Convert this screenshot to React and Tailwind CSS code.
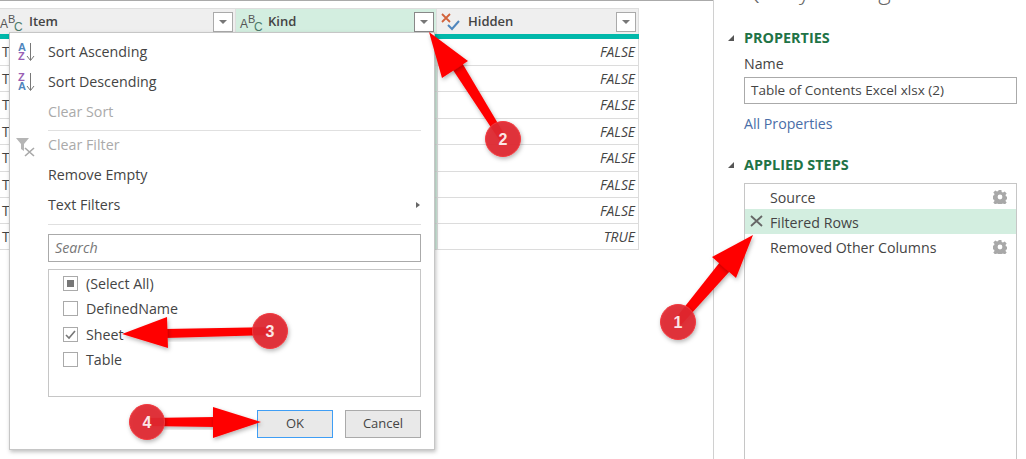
import React from 'react';

const hiddenValues = ['FALSE', 'FALSE', 'FALSE', 'FALSE', 'FALSE', 'FALSE', 'FALSE', 'TRUE'];
const rowHeights = ['h-[27px]', 'h-[26px]', 'h-[27px]', 'h-[26px]', 'h-[27px]', 'h-[26px]', 'h-[26px]', 'h-[26px]'];

const AbcIcon = () => (
  <span className="relative block w-[22px] h-[20px] font-['Liberation_Sans',sans-serif] text-[#555] leading-none">
    <span className="absolute left-0 top-[6px] text-[12px]">A</span>
    <span className="absolute left-[8px] top-[2px] text-[11px]">B</span>
    <span className="absolute left-[14px] top-[9px] text-[12px] text-[#4a7a6a]">C</span>
  </span>
);

const DropButton = ({ strong }) => (
  <span className={`flex items-center justify-center w-[20px] h-[20px] bg-white border ${strong ? 'border-[#888]' : 'border-[#aaa]'}`}>
    <span className="w-0 h-0 border-l-[4px] border-r-[4px] border-t-[4px] border-l-transparent border-r-transparent border-t-[#777]" />
  </span>
);

const BoolIcon = () => (
  <svg width="20" height="20" viewBox="0 0 20 20" fill="none">
    <path d="M1 2l8 8M9 2l-8 8" stroke="#d2633c" strokeWidth="1.8" />
    <path d="M7 13l4 4 7-8" stroke="#4f86bd" strokeWidth="2" />
  </svg>
);

const HeaderCell = ({ label, icon, className, strong, iconWidth }) => (
  <div className={`flex items-center pr-[2px] h-[25px] border-r border-[#dedede] ${className}`}>
    <span className={`shrink-0 ${iconWidth}`}>{icon}</span>
    <span className="flex-1 text-[13px] font-semibold text-[#444]">{label}</span>
    <DropButton strong={strong} />
  </div>
);

const SortIcon = ({ top, bottom, topColor, bottomColor }) => (
  <span className="relative block w-[20px] h-[18px] mt-[-1px] font-['Liberation_Sans',sans-serif] font-bold text-[11px] leading-[9px]">
    <span className={`absolute left-[2px] top-0 ${topColor}`}>{top}</span>
    <span className={`absolute left-[2px] top-[9px] ${bottomColor}`}>{bottom}</span>
    <svg className="absolute left-[10px] top-0" width="9" height="18" viewBox="0 0 9 18" fill="none">
      <path d="M4.5 0v17M1 13l3.5 4.5L8 13" stroke="#777" strokeWidth="1" />
    </svg>
  </span>
);

const FilterClearIcon = () => (
  <svg width="20" height="20" viewBox="0 0 20 20" fill="none">
    <path d="M0 1h13L8 7v7L5 12V7z" fill="#b5b5b5" />
    <path d="M9 11l9 8M18 11l-9 8" stroke="#a8a8a8" strokeWidth="1.6" />
  </svg>
);

const MenuItem = ({ label, icon, disabled, arrow }) => (
  <div className={`relative flex items-center h-[30px] pl-[38px] pr-[14px] ${disabled ? 'text-[#aaa]' : 'text-[#444]'}`}>
    {icon && <span className="absolute left-[6px] top-[7px]">{icon}</span>}
    <span className="flex-1">{label}</span>
    {arrow && <span className="w-0 h-0 border-t-[3px] border-b-[3px] border-l-[4px] border-t-transparent border-b-transparent border-l-[#666]" />}
  </div>
);

const CheckRow = ({ label, state }) => (
  <div className="flex items-center h-[25.3px] pl-[14px]">
    <span className="flex items-center justify-center w-[15px] h-[15px] bg-white border border-[#aaa] mr-[8px]">
      {state === 'mixed' && <span className="w-[7px] h-[7px] bg-[#777]" />}
      {state === 'checked' && (
        <svg width="11" height="11" viewBox="0 0 11 11" fill="none">
          <path d="M1 6l3 3 6-7" stroke="#777" strokeWidth="1.6" />
        </svg>
      )}
    </span>
    <span>{label}</span>
  </div>
);

const FilterPopup = () => (
  <div className="absolute left-[9px] top-[32px] w-[426px] h-[418px] bg-white border border-[#c6c6c6] shadow-[1px_2px_4px_rgba(0,0,0,0.25)] text-[14.25px]">
    <div className="pt-[4px]">
      <MenuItem
        label="Sort Ascending"
        icon={<SortIcon top="A" bottom="Z" topColor="text-[#4f86bd]" bottomColor="text-[#9a5fb4]" />}
      />
      <MenuItem
        label="Sort Descending"
        icon={<SortIcon top="Z" bottom="A" topColor="text-[#9a5fb4]" bottomColor="text-[#4f86bd]" />}
      />
      <MenuItem label="Clear Sort" disabled />
      <div className="ml-[38px] mr-[13px] border-t border-[#e0e0e0] mt-[3px] mb-[-1px]" />
      <MenuItem label="Clear Filter" disabled icon={<FilterClearIcon />} />
      <MenuItem label="Remove Empty" />
      <MenuItem label="Text Filters" arrow />
      <div className="ml-[38px] mr-[13px] border-t border-[#e0e0e0] mt-[4px]" />
    </div>
    <div className="ml-[38px] mr-[13px] mt-[9px] h-[28px] flex items-center px-[6px] border border-[#aaa] italic text-[#777]">Search</div>
    <div className="ml-[38px] mr-[13px] mt-[7px] h-[128px] border border-[#c6c6c6] pt-[1px] text-[#444]">
      <CheckRow label="(Select All)" state="mixed" />
      <CheckRow label="DefinedName" />
      <CheckRow label="Sheet" state="checked" />
      <CheckRow label="Table" />
    </div>
    <div className="flex justify-end gap-[12px] mr-[13px] mt-[13px] text-[13px] text-[#444]">
      <div className="flex items-center justify-center w-[76px] h-[28px] bg-[#e9e9e9] border border-[#3f9ef5]">OK</div>
      <div className="flex items-center justify-center w-[76px] h-[28px] bg-[#e9e9e9] border border-[#aaa]">Cancel</div>
    </div>
  </div>
);

const DataTable = () => (
  <div className="mt-[7px] ml-0 w-[639px]">
    <div className="grid grid-cols-[236px_201px_202px] border-t border-[#dedede]">
      <HeaderCell label="Item" icon={<AbcIcon />} iconWidth="w-[29px]" className="bg-[#efefef]" />
      <HeaderCell label="Kind" icon={<AbcIcon />} iconWidth="w-[28px] ml-[4px]" className="bg-[#d3eee0]" strong />
      <HeaderCell label="Hidden" icon={<BoolIcon />} iconWidth="w-[27px] ml-[4px]" className="bg-[#efefef]" />
    </div>
    <div className="h-[5px] bg-[#01b8aa]" />
    {hiddenValues.map((value, index) => (
      <div key={index} className={`grid grid-cols-[236px_201px_202px] border-b border-[#dcdcdc] ${rowHeights[index]}`}>
        <div className="pl-[2px] text-[14px] leading-[25px] text-[#444]">T</div>
        <div className="bg-[#d3eee0]" />
        <div className="border-l border-r border-[#dcdcdc] pr-[3px] text-right text-[13.8px] italic leading-[25px] text-[#444]">{value}</div>
      </div>
    ))}
  </div>
);

const SectionTitle = ({ children }) => (
  <div className="flex items-center">
    <span className="ml-[14px] w-[16px]">
      <span className="block w-0 h-0 border-b-[6px] border-l-[6px] border-l-transparent border-b-[#555]" />
    </span>
    <span className="text-[14.4px] font-bold text-[#217346] leading-[20px]">{children}</span>
  </div>
);

const Gear = () => (
  <svg width="14" height="14" viewBox="0 0 14 14">
    <path
      fillRule="evenodd"
      fill="#a8a8a8"
      d="M5.6 0h2.8l.3 2 1.3.6 1.7-1.2 2 2-1.2 1.7.5 1.3 2 .3v2.6l-2 .3-.5 1.3 1.2 1.7-2 2-1.7-1.2-1.3.5-.3 2H5.6l-.3-2-1.3-.5-1.7 1.2-2-2 1.2-1.7-.5-1.3-2-.3V5.7l2-.3.5-1.3L.3 2.4l2-2L4 1.6l1.3-.6zM7 4.6a2.4 2.4 0 100 4.8 2.4 2.4 0 000-4.8z"
    />
  </svg>
);

const StepRow = ({ label, active, gear }) => (
  <div className={`relative flex items-center h-[25px] pl-[25px] pr-[9px] ${active ? 'bg-[#d3eee0]' : ''}`}>
    {active && (
      <svg className="absolute left-[5px] top-[6px]" width="13" height="12" viewBox="0 0 13 12" fill="none">
        <path d="M1 1l11 10M12 1L1 11" stroke="#666" strokeWidth="1.8" />
      </svg>
    )}
    <span className="flex-1 pt-[2px]">{label}</span>
    {gear && <Gear />}
  </div>
);

const SettingsPanel = () => (
  <div className="w-[313px] border-l border-[#d0d0d0] text-[14.2px] text-[#444] overflow-hidden">
    <div className="h-[7px] overflow-hidden">
      <div className="ml-[30px] mt-[-26px] text-[24px] leading-[32px] font-light text-[#666]">Query Settings</div>
    </div>
    <div className="mt-[21px]"><SectionTitle>PROPERTIES</SectionTitle></div>
    <div className="ml-[30px] mt-[6px] leading-[20px]">Name</div>
    <div className="ml-[30px] mr-[9px] mt-[3px] h-[27px] flex items-center pl-[6px] border border-[#aaa] text-[13.5px]">Table of Contents Excel xlsx (2)</div>
    <div className="ml-[30px] mt-[10px] leading-[20px] text-[#4a6ea8]">All Properties</div>
    <div className="mt-[21px]"><SectionTitle>APPLIED STEPS</SectionTitle></div>
    <div className="ml-[30px] mr-[9px] mt-[8px] h-[300px] border border-[#c6c6c6]">
      <StepRow label="Source" gear />
      <StepRow label="Filtered Rows" active />
      <StepRow label="Removed Other Columns" gear />
    </div>
  </div>
);

const Arrow = ({ tail, shaft, head, n }) => (
  <g>
    <polygon points={shaft} fill="#ff0000" filter="url(#arrow-shadow)" />
    <polygon points={head} fill="#ff0000" filter="url(#arrow-shadow)" />
    <circle cx={tail[0]} cy={tail[1]} r="17.5" fill="#e0282e" fillOpacity="0.93" stroke="#f23a3f" strokeWidth="1" filter="url(#arrow-shadow)" />
    <text x={tail[0]} y={tail[1] + 6} textAnchor="middle" fontFamily="Liberation Sans, sans-serif" fontWeight="700" fontSize="16" fill="#fbe6e6">{n}</text>
  </g>
);

const Annotations = () => (
  <svg className="absolute inset-0 pointer-events-none" width="1026" height="459" viewBox="0 0 1026 459">
    <defs>
      <filter id="arrow-shadow" x="-30%" y="-30%" width="160%" height="160%">
        <feDropShadow dx="1" dy="2" stdDeviation="2" floodColor="#000" floodOpacity="0.3" />
      </filter>
    </defs>
    <Arrow tail={[678, 322]} n="1" shaft="675,319 720,262 730,271 681,325" head="753,235 712,257 736,278" />
    <Arrow tail={[503, 139]} n="2" shaft="500,141 451,67 461,61 506,137" head="429,32 468,61 442,78" />
    <Arrow tail={[270, 331]} n="3" shaft="270,327 165,329 165,338 270,335" head="122,334 167,317 168,348" />
    <Arrow tail={[147, 422]} n="4" shaft="147,418 215,417 215,427 147,426" head="261,422 213,407 213,438" />
  </svg>
);

export default function App() {
  return (
    <div className="relative flex w-[1026px] h-[459px] bg-white overflow-hidden font-['Open_Sans','Noto_Sans',sans-serif]">
      <div className="w-[713px] border-t border-[#aaa]">
        <DataTable />
      </div>
      <SettingsPanel />
      <FilterPopup />
      <Annotations />
    </div>
  );
}
